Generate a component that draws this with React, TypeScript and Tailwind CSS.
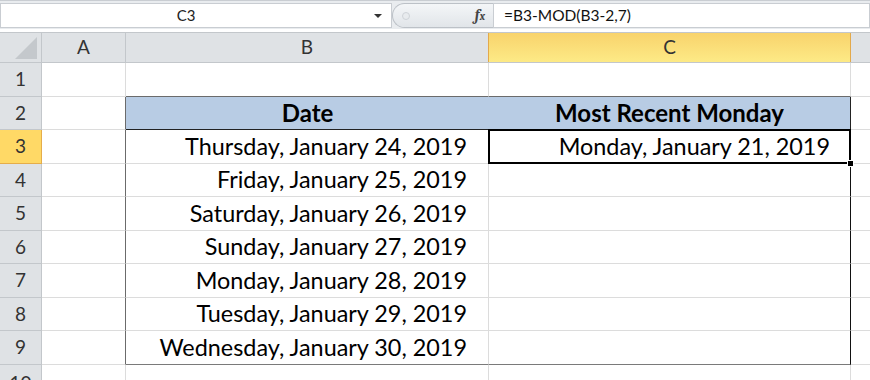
import React from 'react';

const dates = [
  'Thursday, January 24, 2019',
  'Friday, January 25, 2019',
  'Saturday, January 26, 2019',
  'Sunday, January 27, 2019',
  'Monday, January 28, 2019',
  'Tuesday, January 29, 2019',
  'Wednesday, January 30, 2019',
];

const FormulaBar = () => (
  <div className="flex h-[29px] border-t border-[#c9cdd2] bg-[#e9ecef] pt-[2px]">
    <div className="flex h-[25px] w-[392px] items-center border border-[#c9cdd2] bg-white">
      <span className="w-[370px] text-center text-[15px] text-[#222]">C3</span>
      <svg width="10" height="6" viewBox="0 0 10 6" className="ml-[2px]">
        <path d="M1 1 L9 1 L5 5 Z" fill="#333" />
      </svg>
    </div>
    <div className="flex h-[25px] w-[101px] items-center rounded-l-full border border-r-0 border-[#bcc1c7] bg-gradient-to-b from-[#f4f6f8] to-[#e1e5e9]">
      <div className="ml-[9px] h-[8px] w-[8px] rounded-full border border-[#cfd3d8] bg-[#e8ebee]" />
      <span className="ml-auto mr-[8px] font-serif text-[15px] font-bold italic text-[#444]">
        f<span className="text-[11px]">x</span>
      </span>
    </div>
    <div className="flex h-[25px] flex-1 items-center border border-[#c9cdd2] bg-white pl-[10px] text-[15.5px] text-[#111]">
      =B3-MOD(B3-2,7)
    </div>
  </div>
);

const ColumnHeaders = () => (
  <div className="mt-[3px] flex h-[31px] border-y border-[#c3c7cb] bg-[#dfe2e5] text-[19px] text-[#333]">
    <div className="relative w-[42px] shrink-0 border-r border-[#c3c7cb]">
      <svg width="22" height="22" viewBox="0 0 22 22" className="absolute bottom-[3px] right-[4px]">
        <path d="M22 0 L22 22 L0 22 Z" fill="#c4c8cc" />
      </svg>
    </div>
    <div className="flex w-[84px] shrink-0 items-center justify-center border-r border-[#c3c7cb]">A</div>
    <div className="flex w-[363px] shrink-0 items-center justify-center border-r border-[#e3a94b]">B</div>
    <div className="flex w-[362px] shrink-0 items-center justify-center border-r border-[#e3a94b] bg-gradient-to-b from-[#f8d36c] to-[#fdea86]">
      C
    </div>
    <div className="flex-1" />
  </div>
);

export default function App() {
  const rowHeight = (i: number) => (i % 2 === 0 ? 'h-[34px]' : 'h-[33px]');

  return (
    <div className="h-[380px] w-[870px] overflow-hidden bg-white font-[Lato,sans-serif]">
      <FormulaBar />
      <ColumnHeaders />

      {/* row 1 */}
      <div className={`flex ${rowHeight(0)}`}>
        <div className="flex w-[42px] shrink-0 items-center justify-center border-r border-b border-[#c3c7cb] bg-[#dfe2e5] text-[19px] text-[#333]">
          1
        </div>
        <div className="w-[84px] shrink-0 border-r border-b border-[#dcdcdc]" />
        <div className="w-[363px] shrink-0 border-r border-b border-r-[#dcdcdc] border-b-[#6b6b6b]" />
        <div className="w-[362px] shrink-0 border-r border-b border-r-[#dcdcdc] border-b-[#6b6b6b]" />
        <div className="flex-1 border-b border-[#dcdcdc]" />
      </div>

      {/* row 2: table header */}
      <div className={`flex ${rowHeight(1)}`}>
        <div className="flex w-[42px] shrink-0 items-center justify-center border-r border-b border-[#c3c7cb] bg-[#dfe2e5] text-[19px] text-[#333]">
          2
        </div>
        <div className="w-[84px] shrink-0 border-r border-b border-r-[#6b6b6b] border-b-[#dcdcdc]" />
        <div className="flex w-[363px] shrink-0 items-center justify-center border-b border-[#222] bg-[#b8cce4] text-[24px] font-bold text-black">
          Date
        </div>
        <div className="flex w-[362px] shrink-0 items-center justify-center border-r border-b border-[#222] bg-[#b8cce4] text-[24px] font-bold text-black">
          Most Recent Monday
        </div>
        <div className="flex-1 border-b border-[#dcdcdc]" />
      </div>

      {/* rows 3-9 */}
      {dates.map((d, i) => {
        const n = i + 3;
        const last = n === 9;
        const selected = n === 3;
        return (
          <div key={d} className={`flex ${rowHeight(i + 2)}`}>
            <div
              className={`flex w-[42px] shrink-0 items-center justify-center border-r border-b text-[19px] text-[#333] ${
                selected ? 'border-[#e5ad4a] bg-[#ffd966]' : 'border-[#c3c7cb] bg-[#dfe2e5]'
              }`}
            >
              {n}
            </div>
            <div className="w-[84px] shrink-0 border-r border-b border-r-[#6b6b6b] border-b-[#dcdcdc]" />
            <div
              className={`flex w-[363px] shrink-0 items-center justify-end border-r border-b border-r-[#dcdcdc] pr-[21px] text-[23.4px] text-black ${
                last ? 'border-b-[#7a7a7a]' : 'border-b-[#dcdcdc]'
              }`}
            >
              {d}
            </div>
            <div
              className={`relative flex w-[362px] shrink-0 items-center justify-end border-r border-b border-r-[#111] pr-[20px] text-[23.4px] text-black ${
                last ? 'border-b-[#7a7a7a]' : 'border-b-[#dcdcdc]'
              }`}
            >
              {selected && (
                <>
                  Monday, January 21, 2019
                  <div className="absolute -top-px -left-px -right-px -bottom-px z-10 border-2 border-black" />
                  <div className="absolute -right-[4px] -bottom-[4px] z-20 h-[7px] w-[7px] border border-white bg-black" />
                </>
              )}
            </div>
            <div className="flex-1 border-b border-[#dcdcdc]" />
          </div>
        );
      })}

      {/* row 10 */}
      <div className="flex h-[40px]">
        <div className="flex w-[42px] shrink-0 items-start justify-center border-r border-[#c3c7cb] bg-[#dfe2e5] pt-[4px] text-[19px] text-[#333]">
          10
        </div>
        <div className="w-[84px] shrink-0 border-r border-[#dcdcdc]" />
        <div className="w-[363px] shrink-0 border-r border-[#dcdcdc]" />
        <div className="w-[362px] shrink-0 border-r border-[#dcdcdc]" />
        <div className="flex-1" />
      </div>
    </div>
  );
}
